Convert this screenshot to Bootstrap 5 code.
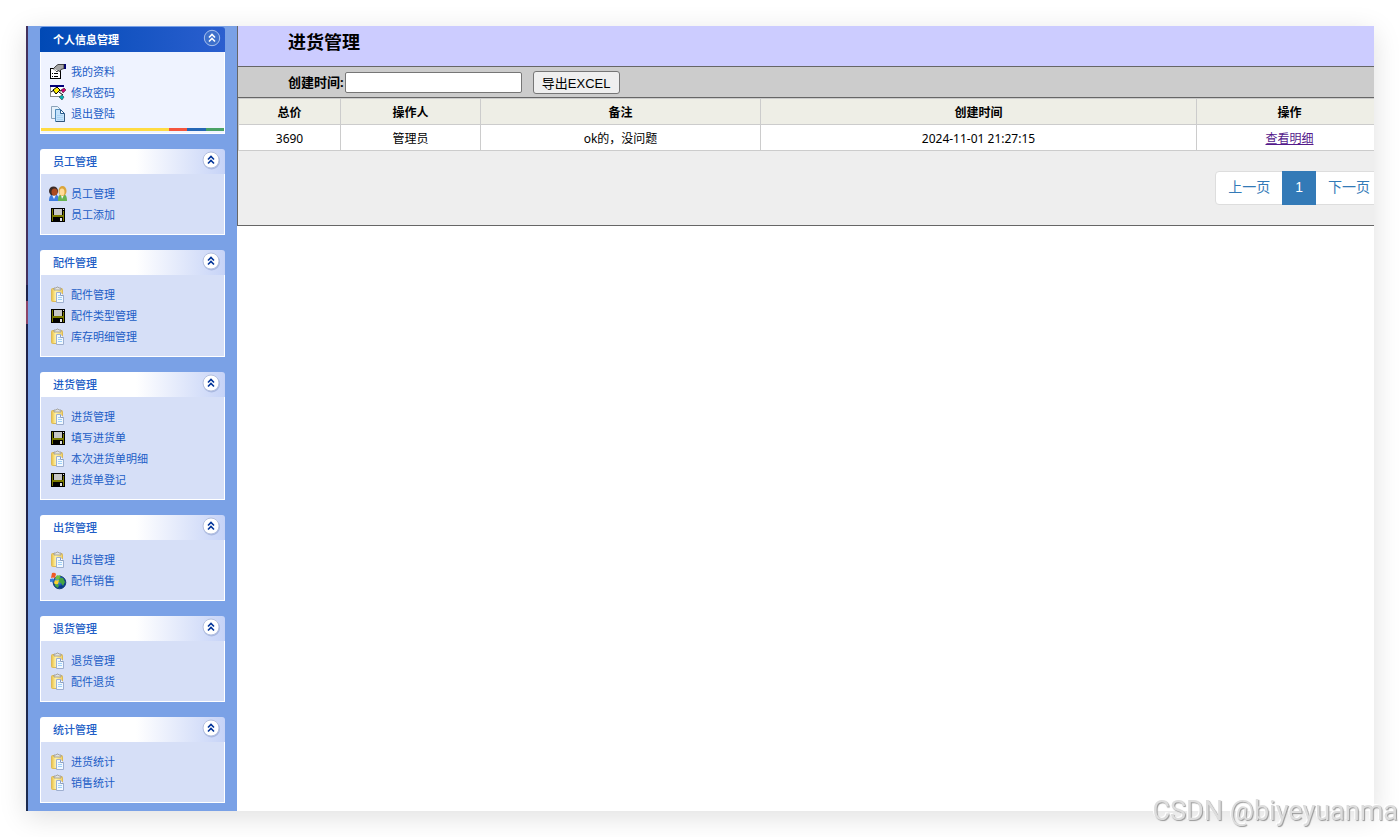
<!DOCTYPE html>
<html lang="zh-CN">
<head>
<meta charset="utf-8">
<meta name="viewport" content="width=device-width, initial-scale=1">
<title>进货管理</title>
<link href="https://cdn.jsdelivr.net/npm/bootstrap@5.3.0/dist/css/bootstrap.min.css" rel="stylesheet">
<style>
body{font-family:"Noto Sans","Noto Sans CJK SC",sans-serif;font-size:12px;line-height:18px;color:#000;padding:26px;background:#fff;overflow-x:hidden}
.app-window{min-height:calc(100vh - 52px);background:#fff;box-shadow:0 6px 26px rgba(0,0,0,.13)}
.side-edge{width:2px;background:linear-gradient(#42305c 0 33%,#1d2148 33% 35%,#8a4468 35% 38%,#1d2148 38% 60%,#1c2b50)}
.sidebar{width:209px;padding:1px 12px 8px;gap:15px;background:#7aa1e6}
.panel-head{height:25px;padding:0 4px 0 13px;border-radius:3px 3px 0 0;font-size:11px;color:#215dc6;background:linear-gradient(90deg,#fff 0 52%,#c6d3f7)}
.panel-head h2{font-size:11px;font-weight:500;line-height:25px;margin:0}
.panel-main .panel-head{color:#fff;background:linear-gradient(90deg,#0049b5,#2b5fcf)}
.panel-main h2{font-weight:700}
.fold{width:20px;height:22px}
.panel-body{padding:9px 8px;border:1px solid #fff;border-top:0;background:#d6dff7}
.panel-main .panel-body{padding-bottom:2px;background:#eff3ff}
.panel-body a{height:21px;font-size:11px;line-height:21px;color:#215dc6;text-decoration:none}
.panel-body svg{width:18px;height:18px;margin-right:4px;flex:none}
.stripe{height:3px;margin:0 -8px;background:linear-gradient(90deg,#ffdb42 0 70%,#f5553d 70% 80%,#2566b5 80% 90%,#4aa266 90%)}
.main-pane{min-width:0;overflow:hidden}
.sheet{border-left:1px solid #666;border-bottom:1px solid #666;background:#eee}
.title-bar{height:41px;padding:0 50px;background:#ccf;border-bottom:1px solid #666}
.title-bar h1{font-size:18px;font-weight:700;line-height:32px;margin:0}
.filter-bar{height:31px;padding-left:50px;background:#ccc;border-bottom:1px solid #666}
.filter-bar label{font-size:13px;font-weight:700}
.filter-bar input{width:177px;height:21px;margin:0 11px 0 1px;border:1px solid #767676;border-radius:2px;font-size:13px}
.filter-bar button{width:87px;height:23px;padding:0;border:1px solid #767676;border-radius:3px;background:#efefef;color:#000;font:13px "Liberation Sans","Noto Sans CJK SC",sans-serif}
.wide{width:calc(100% + 9px)}
.records{table-layout:fixed;width:100%;border-collapse:collapse;text-align:center;background:#fff}
.records th,.records td{border:1px solid #ccc;height:26px;padding:3px 0 0}
.records th{background:#eeeee6;font-weight:700}
.records a{color:#551a8b}
.pager{padding:20px 0}
.pager .pagination{--bs-pagination-font-size:14px;--bs-pagination-color:#337ab7;--bs-pagination-padding-x:12px;--bs-pagination-padding-y:5px;--bs-pagination-border-color:#ddd;--bs-pagination-border-radius:4px;--bs-pagination-active-bg:#337ab7;--bs-pagination-active-border-color:#337ab7;line-height:20px;font-family:"Liberation Sans","Noto Sans CJK SC",sans-serif}
.pager .page-link{height:34px}
.watermark{position:fixed;right:2px;bottom:9px;font:27px/34px Roboto,sans-serif;color:#ddd;text-shadow:1px 1px 1px #999,-1px -1px 0 #fff}
</style>
</head>
<body>
<svg width="0" height="0" class="position-absolute" aria-hidden="true">
<defs>
<linearGradient id="gold" x2="1"><stop stop-color="#e9c043"/><stop offset=".4" stop-color="#fff3ad"/><stop offset="1" stop-color="#efcf66"/></linearGradient>
<radialGradient id="globe" cx=".4" cy=".35"><stop stop-color="#6cb8f5"/><stop offset="1" stop-color="#07398f"/></radialGradient>
<symbol id="i-prop" viewBox="0 0 18 18"><g shape-rendering="crispEdges"><path d="M1 5h11v11H1z"/><path d="M2 6h9v9H2z" fill="#fff"/><path d="M3 10h1v1H3zM5 10h4v1H5zM3 13h1v1H3zM5 13h4v1H5z"/><path d="M15 1h2v5h-2z" fill="#00007b"/></g><path d="M4 6l3-3 2-1.500h6v4l-3 1-1 2-2-1-1 1.500-2-2z" fill="#a5a5a5" stroke="#222" stroke-width=".8"/><path d="M4 7h3m-1 2 2-2" stroke="#fff" fill="none"/></symbol>
<symbol id="i-pass" viewBox="0 0 18 18"><g shape-rendering="crispEdges"><path d="M1 1h14v2H1z" fill="#00007b"/><path d="M1 3h13v9H1z" fill="#fff"/><path d="M1 3h1v9h9v1H1z" fill="#888"/></g><path d="M4 6l4-3 3 3-4 4z" fill="#ffef00" stroke="#000"/><path d="M2 8l3-2M11 7l5-2M10 8l4 3" stroke="#000"/><path d="M12 6l3-2 2 2-3 3z" fill="#d00070" stroke="#222" stroke-width=".5"/><path d="M10 13l3-2 2 2-2 3z" fill="#00b5b5" stroke="#222" stroke-width=".5"/></symbol>
<symbol id="i-copy" viewBox="0 0 18 18"><path d="M2.500 1.500h6l3 3v9h-9z" fill="#e6f1fb" stroke="#8aa2b8"/><path d="M6.500 4.500h5l4 4v8h-9z" fill="#c3e2fb" stroke="#4d8abb"/><path d="M11.500 4.500v4h4z" fill="#fff" stroke="#285b8c"/><path d="M8 10.500h6M8 12.500h6M8 14.500h6" stroke="#a9d2f2"/><path d="M15.500 9v7.500H7" fill="none" stroke="#32577c"/></symbol>
<symbol id="i-users" viewBox="0 0 18 18"><path d="M0 16c0-5 2-7 5-7s5 2 5 7z" fill="#3f7de0"/><path d="M9 16c0-5 1-7 5-7 3 0 4 3 4 7z" fill="#65b351"/><path d="M3 10l2 4 2-4zM12 10l1 4 2-4z" fill="#f6f8ff"/><circle cx="4.500" cy="6" r="4.500" fill="#3a2b28"/><ellipse cx="5.500" cy="7" rx="3" ry="3.500" fill="#ad4b20"/><ellipse cx="13.500" cy="6" rx="4" ry="5" fill="#dba53b"/><ellipse cx="13" cy="7" rx="2.500" ry="3.500" fill="#ffdc98"/></symbol>
<symbol id="i-disk" viewBox="0 0 18 18"><g shape-rendering="crispEdges"><path d="M2 2h14v14H2z"/><path d="M3 3h1v12H3zM4 9h10v2H4zM14 5h1v10h-1z" fill="#7b7b00"/><path d="M5 3h8v6H5z" fill="#c6c6c6"/><path d="M5 11h9v5H5z"/><path d="M11 12h2v3h-2zM14 3h1v1h-1z" fill="#e2e2e2"/></g></symbol>
<symbol id="i-paste" viewBox="0 0 18 18"><rect x="2.500" y="2.500" width="11" height="13" rx="1" fill="url(#gold)" stroke="#dcb958"/><path d="M5 4V2h2l1-1h1l1 1h2v2z" fill="#e3e3e0" stroke="#8e8b80" stroke-width=".7"/><path d="M7.500 6.500h4l3 3v7h-7z" fill="#f2f9ff" stroke="#9eafd0"/><path d="M11.500 6.500v3h3" fill="#fff" stroke="#8a9fc0"/><path d="M9 9.500h2M9 11.500h4M9 13.500h4" stroke="#9fd0f8"/></symbol>
<symbol id="i-globe" viewBox="0 0 18 18"><circle cx="10.500" cy="10.500" r="6.300" fill="url(#globe)" stroke="#164078"/><path d="M10 6l4 0 2 4-2 4-2-3-3-1zM6 11l4 2-1 3-3-2z" fill="#46a641"/><path d="M3 1q3-1 4 1L6 6Q4 5 2 6z" fill="#f05b25"/><path d="M8 3q2 1 4 0L10 7Q8 8 6 7z" fill="#72c440"/><path d="M1 7q3-1 4 0l-1 4q-1-2-3-1z" fill="#347ddf"/><path d="M6 8q2 1 4 0l-1 4q-3 1-4-1z" fill="#ffd02e"/></symbol>
<symbol id="i-fold" viewBox="0 0 20 22"><circle cx="10.500" cy="12" r="8.500" fill="#7186bd" opacity=".4"/><circle cx="10" cy="11" r="8" fill="#fff" stroke="#b4c0df"/><path d="M7 10.500l3-3 3 3M7 14.500l3-3 3 3" fill="none" stroke="#003399" stroke-width="1.600"/></symbol>
<symbol id="i-fold-main" viewBox="0 0 20 22"><circle cx="11" cy="11" r="7.700" fill="#3d70cb" stroke="#a8c0ed"/><path d="M8 10.500l3-3 3 3M8 14.500l3-3 3 3" fill="none" stroke="#fff" stroke-width="1.600"/></symbol>
</defs>
</svg>

<div class="app-window d-flex">
  <div class="side-edge flex-shrink-0"></div>
  <nav class="sidebar d-flex flex-column flex-shrink-0" aria-label="主菜单">
    <section class="panel-main">
      <div class="panel-head d-flex justify-content-between"><h2>个人信息管理</h2><svg class="fold"><use href="#i-fold-main"/></svg></div>
      <div class="panel-body">
        <a href="#" class="d-flex align-items-center"><svg><use href="#i-prop"/></svg>我的资料</a>
        <a href="#" class="d-flex align-items-center"><svg><use href="#i-pass"/></svg>修改密码</a>
        <a href="#" class="d-flex align-items-center"><svg><use href="#i-copy"/></svg>退出登陆</a>
        <div class="stripe mt-1"></div>
      </div>
    </section>
    <section>
      <div class="panel-head d-flex justify-content-between"><h2>员工管理</h2><svg class="fold"><use href="#i-fold"/></svg></div>
      <div class="panel-body">
        <a href="#" class="d-flex align-items-center"><svg><use href="#i-users"/></svg>员工管理</a>
        <a href="#" class="d-flex align-items-center"><svg><use href="#i-disk"/></svg>员工添加</a>
      </div>
    </section>
    <section>
      <div class="panel-head d-flex justify-content-between"><h2>配件管理</h2><svg class="fold"><use href="#i-fold"/></svg></div>
      <div class="panel-body">
        <a href="#" class="d-flex align-items-center"><svg><use href="#i-paste"/></svg>配件管理</a>
        <a href="#" class="d-flex align-items-center"><svg><use href="#i-disk"/></svg>配件类型管理</a>
        <a href="#" class="d-flex align-items-center"><svg><use href="#i-paste"/></svg>库存明细管理</a>
      </div>
    </section>
    <section>
      <div class="panel-head d-flex justify-content-between"><h2>进货管理</h2><svg class="fold"><use href="#i-fold"/></svg></div>
      <div class="panel-body">
        <a href="#" class="d-flex align-items-center"><svg><use href="#i-paste"/></svg>进货管理</a>
        <a href="#" class="d-flex align-items-center"><svg><use href="#i-disk"/></svg>填写进货单</a>
        <a href="#" class="d-flex align-items-center"><svg><use href="#i-paste"/></svg>本次进货单明细</a>
        <a href="#" class="d-flex align-items-center"><svg><use href="#i-disk"/></svg>进货单登记</a>
      </div>
    </section>
    <section>
      <div class="panel-head d-flex justify-content-between"><h2>出货管理</h2><svg class="fold"><use href="#i-fold"/></svg></div>
      <div class="panel-body">
        <a href="#" class="d-flex align-items-center"><svg><use href="#i-paste"/></svg>出货管理</a>
        <a href="#" class="d-flex align-items-center"><svg><use href="#i-globe"/></svg>配件销售</a>
      </div>
    </section>
    <section>
      <div class="panel-head d-flex justify-content-between"><h2>退货管理</h2><svg class="fold"><use href="#i-fold"/></svg></div>
      <div class="panel-body">
        <a href="#" class="d-flex align-items-center"><svg><use href="#i-paste"/></svg>退货管理</a>
        <a href="#" class="d-flex align-items-center"><svg><use href="#i-paste"/></svg>配件退货</a>
      </div>
    </section>
    <section>
      <div class="panel-head d-flex justify-content-between"><h2>统计管理</h2><svg class="fold"><use href="#i-fold"/></svg></div>
      <div class="panel-body">
        <a href="#" class="d-flex align-items-center"><svg><use href="#i-paste"/></svg>进货统计</a>
        <a href="#" class="d-flex align-items-center"><svg><use href="#i-paste"/></svg>销售统计</a>
      </div>
    </section>
  </nav>

  <main class="main-pane flex-grow-1">
    <div class="sheet">
      <header class="title-bar"><h1>进货管理</h1></header>
      <form class="filter-bar d-flex align-items-center">
        <label for="created">创建时间:</label>
        <input type="text" id="created">
        <button type="button">导出EXCEL</button>
      </form>
      <div class="wide">
        <table class="records">
          <colgroup><col style="width:102px"><col style="width:140px"><col style="width:280px"><col><col style="width:186px"></colgroup>
          <thead><tr><th>总价</th><th>操作人</th><th>备注</th><th>创建时间</th><th>操作</th></tr></thead>
          <tbody><tr><td>3690</td><td>管理员</td><td>ok的，没问题</td><td>2024-11-01 21:27:15</td><td><a href="#">查看明细</a></td></tr></tbody>
        </table>
        <nav class="pager d-flex justify-content-end" aria-label="分页">
          <ul class="pagination mb-0">
            <li class="page-item"><a class="page-link" href="#">上一页</a></li>
            <li class="page-item active"><a class="page-link" href="#">1</a></li>
            <li class="page-item"><a class="page-link" href="#">下一页</a></li>
          </ul>
        </nav>
      </div>
    </div>
  </main>
</div>
<div class="watermark">CSDN @biyeyuanma</div>
<script src="https://cdn.jsdelivr.net/npm/bootstrap@5.3.0/dist/js/bootstrap.bundle.min.js"></script>
</body>
</html>
